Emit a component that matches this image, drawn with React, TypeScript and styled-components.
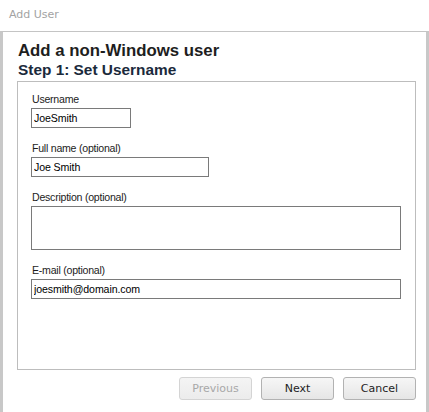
import * as React from "react";
import styled, { createGlobalStyle } from "styled-components";

const GlobalStyle = createGlobalStyle`
    html, body {
        margin: 0;
        padding: 0;
        background: #fff;
    }
    body {
        width: 429px;
        height: 412px;
        overflow: hidden;
        font-family: "Liberation Sans", Arial, sans-serif;
    }
`;

const TitleBar = styled.div`
    height: 31px;
    box-sizing: border-box;
    padding: 8px 0 0 9px;
    font-family: "DejaVu Sans", Tahoma, sans-serif;
    font-size: 11px;
    color: #a3a3a3;
`;

const Frame = styled.div`
    height: 381px;
    box-sizing: border-box;
    border-top: 1px solid #c4c4c4;
    border-left: 3px solid #c8c8c8;
    border-right: 3px solid #c8c8c8;
    padding: 9px 10px 0 14px;
    display: flex;
    flex-direction: column;
`;

const Heading = styled.h1`
    margin: 0 0 0 1px;
    font-size: 16.8px;
    line-height: 20px;
    font-weight: bold;
    color: #1e1e1e;
`;

const SubHeading = styled.h2`
    margin: 0 0 0 1px;
    font-size: 15.4px;
    line-height: 17px;
    font-weight: bold;
    color: #1b2a3c;
`;

const GroupBox = styled.div`
    margin-top: 3px;
    height: 289px;
    box-sizing: border-box;
    border: 1px solid #bdbdbd;
    padding: 11px 14px 0 13px;
    display: flex;
    flex-direction: column;
`;

const Field = styled.div`
    display: flex;
    flex-direction: column;
    margin-bottom: 14px;
`;

const Label = styled.label`
    font-family: "Liberation Sans", Tahoma, sans-serif;
    font-size: 10.6px;
    letter-spacing: -0.25px;
    line-height: 13px;
    color: #1c1c1c;
    margin-bottom: 2px;
    padding-left: 1px;
`;

const TextBox = styled.input<{ $width?: number }>`
    box-sizing: border-box;
    width: ${props => (props.$width ? `${props.$width}px` : "100%")};
    height: 20px;
    border: 1px solid #7a7a7a;
    padding: 0 2px;
    font-family: "Liberation Sans", Tahoma, sans-serif;
    font-size: 10.6px;
    letter-spacing: -0.1px;
    color: #000;
    background: #fff;
    outline: none;
`;

const TextArea = styled.textarea`
    box-sizing: border-box;
    width: 100%;
    height: 44px;
    border: 1px solid #7a7a7a;
    resize: none;
    outline: none;
    padding: 2px 3px;
    font-family: "Liberation Sans", Tahoma, sans-serif;
    font-size: 10.6px;
`;

const ButtonRow = styled.div`
    display: flex;
    justify-content: flex-end;
    gap: 9px;
    margin-top: 7px;
`;

const Button = styled.button`
    width: 73px;
    height: 23px;
    box-sizing: border-box;
    border: 1px solid #b2b2b2;
    border-radius: 3px;
    background: linear-gradient(#f6f6f6, #e6e6e6);
    font-family: "DejaVu Sans", Tahoma, sans-serif;
    font-size: 11px;
    color: #1e1e1e;
    padding: 0;
    &:disabled {
        border-color: #d4d4d4;
        background: linear-gradient(#f4f4f4, #ececec);
        color: #a8a8a8;
    }
`;

export default function App() {
    return (
        <>
            <GlobalStyle />
            <TitleBar>Add User</TitleBar>
            <Frame>
                <Heading>Add a non-Windows user</Heading>
                <SubHeading>Step 1: Set Username</SubHeading>
                <GroupBox>
                    <Field>
                        <Label>Username</Label>
                        <TextBox $width={100} defaultValue="JoeSmith" />
                    </Field>
                    <Field>
                        <Label>Full name (optional)</Label>
                        <TextBox $width={178} defaultValue="Joe Smith" />
                    </Field>
                    <Field>
                        <Label>Description (optional)</Label>
                        <TextArea />
                    </Field>
                    <Field>
                        <Label>E-mail (optional)</Label>
                        <TextBox defaultValue="joesmith@domain.com" />
                    </Field>
                </GroupBox>
                <ButtonRow>
                    <Button disabled>Previous</Button>
                    <Button>Next</Button>
                    <Button>Cancel</Button>
                </ButtonRow>
            </Frame>
        </>
    );
}
